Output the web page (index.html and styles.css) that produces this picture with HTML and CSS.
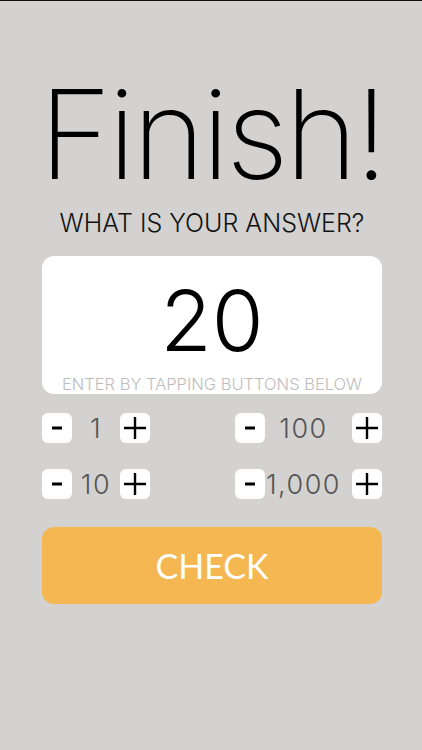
FILE: index.html
```html
<!DOCTYPE html>
<html lang="en">

<head>
    <meta charset="UTF-8">
    <meta name="viewport" content="width=device-width, initial-scale=1.0">
    <title>Finish!</title>
    <link rel="stylesheet" href="styles.css">
</head>

<body>
    <div class="screen">
        <h1 class="title">Finish!</h1>
        <p class="question">WHAT IS YOUR ANSWER?</p>

        <div class="answer-box">
            <div class="answer">20</div>
            <div class="hint">ENTER BY TAPPING BUTTONS BELOW</div>
        </div>

        <div class="steppers">
            <div class="stepper">
                <button class="step-btn" aria-label="-">
                    <svg width="12" height="4" viewBox="0 0 12 4"><rect x="1" y="0.5" width="10" height="3" fill="#000"/></svg>
                </button>
                <span class="step-value">1</span>
                <button class="step-btn" aria-label="+">
                    <svg width="22" height="22" viewBox="0 0 22 22"><path d="M11 0V22M0 11H22" stroke="#000" stroke-width="2.4"/></svg>
                </button>
            </div>
            <div class="stepper right">
                <button class="step-btn" aria-label="-">
                    <svg width="12" height="4" viewBox="0 0 12 4"><rect x="1" y="0.5" width="10" height="3" fill="#000"/></svg>
                </button>
                <span class="step-value">100</span>
                <button class="step-btn" aria-label="+">
                    <svg width="22" height="22" viewBox="0 0 22 22"><path d="M11 0V22M0 11H22" stroke="#000" stroke-width="2.4"/></svg>
                </button>
            </div>
            <div class="stepper">
                <button class="step-btn" aria-label="-">
                    <svg width="12" height="4" viewBox="0 0 12 4"><rect x="1" y="0.5" width="10" height="3" fill="#000"/></svg>
                </button>
                <span class="step-value">10</span>
                <button class="step-btn" aria-label="+">
                    <svg width="22" height="22" viewBox="0 0 22 22"><path d="M11 0V22M0 11H22" stroke="#000" stroke-width="2.4"/></svg>
                </button>
            </div>
            <div class="stepper right">
                <button class="step-btn" aria-label="-">
                    <svg width="12" height="4" viewBox="0 0 12 4"><rect x="1" y="0.5" width="10" height="3" fill="#000"/></svg>
                </button>
                <span class="step-value">1,000</span>
                <button class="step-btn" aria-label="+">
                    <svg width="22" height="22" viewBox="0 0 22 22"><path d="M11 0V22M0 11H22" stroke="#000" stroke-width="2.4"/></svg>
                </button>
            </div>
        </div>

        <button class="check-btn">CHECK</button>
    </div>
</body>

</html>
```

FILE: styles.css
```css
html,
body {
    margin: 0;
    padding: 0;
}

body {
    background-color: #D3D2D0;
    border-top: 1px solid #111;
    font-family: "Inter", "Liberation Sans", sans-serif;
    width: 422px;
    height: 749px;
    overflow: hidden;
}

.screen {
    display: flex;
    flex-direction: column;
    align-items: center;
    padding: 0 40px 0 42px;
}

.title {
    margin: 60px 0 0;
    font-size: 124px;
    font-weight: 250;
    line-height: 147px;
    letter-spacing: -3.5px;
    color: #000;
}

.question {
    margin: 0;
    font-size: 25px;
    font-weight: 300;
    line-height: 30px;
    color: #111;
}

.answer-box {
    margin-top: 18px;
    width: 100%;
    height: 138px;
    background-color: #FFF;
    border-radius: 12px;
    display: flex;
    flex-direction: column;
    align-items: center;
}

.answer {
    margin-top: 23px;
    font-size: 84px;
    font-weight: 300;
    line-height: 84px;
    color: #000;
}

.hint {
    margin-top: 11px;
    font-size: 16.5px;
    font-weight: 300;
    color: #BDBDBD;
}

.steppers {
    width: 100%;
    margin-top: 19px;
    display: grid;
    grid-template-columns: 108px 147px;
    justify-content: space-between;
    row-gap: 26px;
}

.stepper {
    display: flex;
    align-items: center;
    height: 30px;
}

.step-btn {
    width: 30px;
    height: 30px;
    padding: 0;
    border: none;
    border-radius: 6px;
    background-color: #FFF;
    display: flex;
    align-items: center;
    justify-content: center;
    flex-shrink: 0;
}

.step-value {
    flex: 1;
    text-align: center;
    font-size: 27px;
    font-weight: 300;
    color: #555;
    letter-spacing: 1.5px;
}

.right .step-value {
    padding-right: 10px;
}

.check-btn {
    margin-top: 28px;
    width: 100%;
    height: 77px;
    border: none;
    border-radius: 12px;
    background-color: #F5B751;
    color: #FFF;
    font-family: "Lato", "Inter", sans-serif;
    font-size: 34px;
    font-weight: 400;
}
```
